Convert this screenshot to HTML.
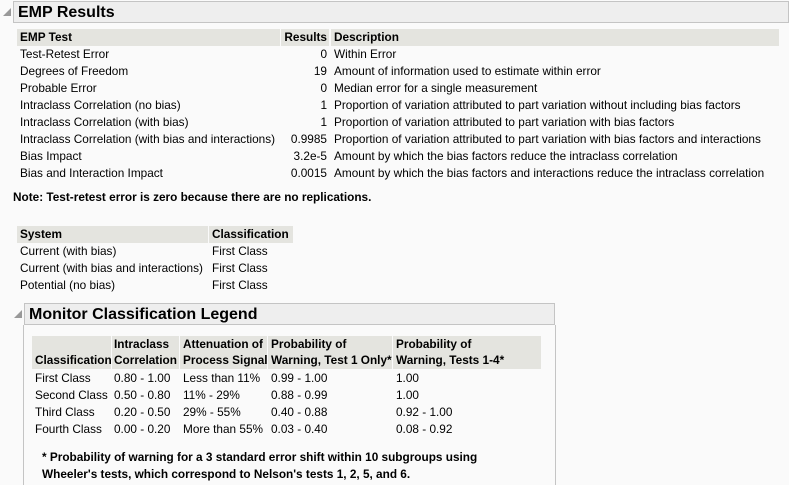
<!DOCTYPE html>
<html><head><meta charset="utf-8"><style>
body{margin:0;width:789px;height:481px;background:#fafafa;font-family:"Liberation Sans",sans-serif;font-size:11.8px;color:#000;position:relative;overflow:hidden}
div{position:absolute;white-space:nowrap}
.t{line-height:17px}
.r{text-align:right}
.b{font-weight:bold}
.hd{background:#eeeeee;border:1px solid #c4c4c4;font-weight:bold;font-size:16px;line-height:21px;padding-left:4px;box-sizing:border-box}
.gh{background:#e4e4df}
.tri{width:0;height:0;border-left:8px solid transparent;border-bottom:8px solid #999}
</style></head><body>
<div class="tri" style="left:3px;top:8px"></div>
<div class="hd" style="left:13px;top:1px;width:776px;height:22px">EMP Results</div>
<div class="gh" style="left:17px;top:29px;width:263px;height:17px"></div>
<div class="gh" style="left:281px;top:29px;width:48px;height:17px"></div>
<div class="gh" style="left:331px;top:29px;width:448px;height:17px"></div>
<div class="t b" style="left:20px;top:29px">EMP Test</div>
<div class="t b r" style="left:280px;top:29px;width:47px">Results</div>
<div class="t b" style="left:334px;top:29px">Description</div>

<div class="t" style="left:20px;top:46px">Test-Retest Error<br>Degrees of Freedom<br>Probable Error<br>Intraclass Correlation (no bias)<br>Intraclass Correlation (with bias)<br>Intraclass Correlation (with bias and interactions)<br>Bias Impact<br>Bias and Interaction Impact</div>
<div class="t r" style="left:260px;top:46px;width:67px">0<br>19<br>0<br>1<br>1<br>0.9985<br>3.2e-5<br>0.0015</div>
<div class="t" style="left:334px;top:46px">Within Error<br>Amount of information used to estimate within error<br>Median error for a single measurement<br>Proportion of variation attributed to part variation without including bias factors<br>Proportion of variation attributed to part variation with bias factors<br>Proportion of variation attributed to part variation with bias factors and interactions<br>Amount by which the bias factors reduce the intraclass correlation<br>Amount by which the bias factors and interactions reduce the intraclass correlation</div>

<div class="t b" style="left:13px;top:189px">Note: Test-retest error is zero because there are no replications.</div>

<div class="gh" style="left:17px;top:226px;width:191px;height:17px"></div>
<div class="gh" style="left:209px;top:226px;width:84px;height:17px"></div>
<div class="t b" style="left:20px;top:226px">System</div>
<div class="t b" style="left:212px;top:226px">Classification</div>
<div class="t" style="left:20px;top:243px">Current (with bias)<br>Current (with bias and interactions)<br>Potential (no bias)</div>
<div class="t" style="left:212px;top:243px">First Class<br>First Class<br>First Class</div>

<div class="tri" style="left:14px;top:310px"></div>
<div class="hd" style="left:24px;top:303px;width:531px;height:22px">Monitor Classification Legend</div>
<div style="left:23px;top:325px;width:531px;height:160px;border-left:1px solid #c4c4c4;border-right:1px solid #c4c4c4"></div>
<div class="gh" style="left:32px;top:336px;width:79px;height:33px"></div>
<div class="gh" style="left:112px;top:336px;width:67px;height:33px"></div>
<div class="gh" style="left:180px;top:336px;width:87px;height:33px"></div>
<div class="gh" style="left:268px;top:336px;width:124px;height:33px"></div>
<div class="gh" style="left:393px;top:336px;width:148px;height:33px"></div>
<div class="t b" style="left:35px;top:352px">Classification</div>
<div class="t b" style="left:114px;top:336px;line-height:16px">Intraclass<br>Correlation</div>
<div class="t b" style="left:183px;top:336px;line-height:16px">Attenuation of<br>Process Signal</div>
<div class="t b" style="left:271px;top:336px;line-height:16px">Probability of<br>Warning, Test 1 Only*</div>
<div class="t b" style="left:396px;top:336px;line-height:16px">Probability of<br>Warning, Tests 1-4*</div>
<div class="t" style="left:35px;top:370px">First Class<br>Second Class<br>Third Class<br>Fourth Class</div>
<div class="t" style="left:114px;top:370px">0.80 - 1.00<br>0.50 - 0.80<br>0.20 - 0.50<br>0.00 - 0.20</div>
<div class="t" style="left:183px;top:370px">Less than 11%<br>11% - 29%<br>29% - 55%<br>More than 55%</div>
<div class="t" style="left:271px;top:370px">0.99 - 1.00<br>0.88 - 0.99<br>0.40 - 0.88<br>0.03 - 0.40</div>
<div class="t" style="left:396px;top:370px">1.00<br>1.00<br>0.92 - 1.00<br>0.08 - 0.92</div>
<div class="t b" style="left:42px;top:449px">* Probability of warning for a 3 standard error shift within 10 subgroups using<br>Wheeler's tests, which correspond to Nelson's tests 1, 2, 5, and 6.</div>
</body></html>
